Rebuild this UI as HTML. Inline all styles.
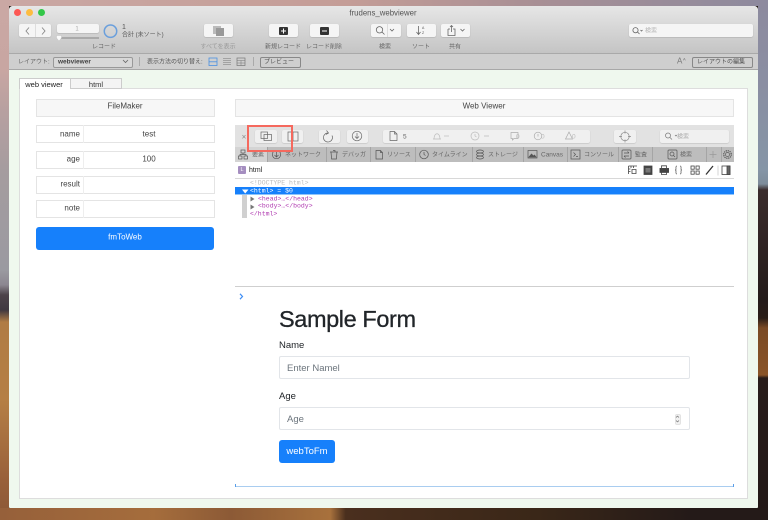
<!DOCTYPE html>
<html><head><meta charset="utf-8"><style>
html,body{margin:0;padding:0;width:768px;height:520px;overflow:hidden;background:#241b18}
#r{position:relative;width:768px;height:520px;overflow:hidden;filter:blur(.3px);font-family:"Liberation Sans","Noto Sans CJK JP",sans-serif}
#r div,#r svg{position:absolute}
.t{position:absolute;white-space:nowrap;line-height:1;transform:translateY(calc(-50% + .5px))}
.c{transform:translate(-50%,calc(-50% + .5px))}
.l{font-size:6px;color:#666}
.b{background:#f5f5f5;border-radius:2px;box-shadow:0 .5px 1px #aaa}
.g{background:#f0f0f0;border-radius:2px;box-shadow:0 .5px 1px #bbb}
.f{background:#fff;border:1px solid #e4e4e4;box-sizing:border-box}
.s{width:.5px;top:147px;height:15px;background:#a5a5a5}
.tb{font-size:6px;color:#666}
.m{font-family:"Liberation Mono",monospace;font-size:6.5px}
.ic{fill:none;stroke:#666;stroke-width:.8}
.bs{font-size:9.5px;color:#212529}
.ph{font-size:9.5px;color:#6c757d}
.o{border:1px solid #e2e5e9;border-radius:2px;box-sizing:border-box;background:#fff}
</style></head><body><div id="r">
<!-- wallpaper -->
<div style="left:0;top:0;width:9px;height:520px;background:linear-gradient(#caa8a4 0,#c8a6a2 70px,#b7a0a0 110px,#a59c9f 170px,#9a9aa0 270px,#8b8690 285px,#4d434a 295px,#3f3840 310px,#b07c44 322px,#b57f45 400px,#98603a 480px,#8a5735 520px)"></div>
<div style="left:758px;top:0;width:10px;height:520px;background:linear-gradient(#8d8a9e 0,#8a8ea2 80px,#8595a6 170px,#7d8c9a 184px,#3a2c2c 190px,#241b1a 300px,#2a1d18 318px,#7a4a26 328px,#8a5428 375px,#281c1a 378px,#231918 520px)"></div>
<div style="left:0;top:0;width:768px;height:6px;background:linear-gradient(90deg,#caa8a4,#c49d97 45%,#a88f95 70%,#8d8a9e)"></div>
<div style="left:0;top:508px;width:768px;height:12px;background:linear-gradient(90deg,#96603a 0,#a56d3c 20%,#8c5a36 30%,#a8713c 43%,#4a2f1e 45%,#3a2718 70%,#241a18 90%)"></div>
<!-- window -->
<div style="left:9px;top:6px;width:749px;height:502px;background:#eff8ee;border-radius:4px 4px 1px 1px;overflow:hidden">
<div style="left:0;top:0;width:749px;height:47px;background:linear-gradient(#e6e6e6,#c4c4c4);border-bottom:1px solid #a9a9a9"></div>
<div style="left:0;top:48px;width:749px;height:15px;background:#cfcfcf;border-bottom:1px solid #a8a8a8"></div>
</div>
<div style="left:14px;top:9px;width:7px;height:7px;border-radius:50%;background:#fc5753"></div>
<div style="left:26px;top:9px;width:7px;height:7px;border-radius:50%;background:#fdbc40"></div>
<div style="left:38px;top:9px;width:7px;height:7px;border-radius:50%;background:#33c748"></div>
<span class="t c" style="left:383px;top:13px;font-size:7.800px;color:#555">frudens_webviewer</span>
<!-- toolbar -->
<div class="b" style="left:19px;top:24px;width:32px;height:13px"></div>
<div style="left:35px;top:24px;width:.5px;height:13px;background:#ddd"></div>
<svg style="left:25px;top:27px" width="22" height="8"><path d="M4 .5L1 4l3 3.5M17 .5l3 3.500-3 3.500" fill="none" stroke="#888" stroke-width=".9"/></svg>
<div class="b" style="left:57px;top:24px;width:42px;height:9px"></div>
<span class="t c" style="left:77px;top:28.500px;font-size:6px;color:#aaa">1</span>
<div style="left:57px;top:37px;width:42px;height:1.500px;background:#aaa"></div>
<svg style="left:56px;top:35px" width="7" height="7"><path d="M.5.5h5v2.500l-2.500 3-2.500-3z" fill="#fafafa" stroke="#bbb" stroke-width=".4"/></svg>
<svg style="left:103px;top:24px" width="15" height="15"><circle cx="7.500" cy="7.200" r="6.200" fill="none" stroke="#6a9fdc" stroke-width="1.500"/></svg>
<span class="t" style="left:122px;top:26.500px;font-size:7px;color:#555">1</span>
<span class="t" style="left:122px;top:35px;font-size:6px;color:#555">合計 (未ソート)</span>
<span class="t c l" style="left:104px;top:47px">レコード</span>
<div class="b" style="left:204px;top:24px;width:29px;height:13px"></div>
<svg style="left:212px;top:25px" width="14" height="11"><rect x="1" y="1" width="8" height="8" fill="#bbb"/><rect x="4" y="3" width="8" height="8" fill="#999"/></svg>
<span class="t c l" style="left:218px;top:47px;color:#999">すべてを表示</span>
<div class="b" style="left:269px;top:24px;width:29px;height:13px"></div>
<svg style="left:279px;top:26.500px" width="9" height="9"><rect width="9" height="8" rx="1" fill="#333"/><path d="M4.500 1.500v5M2 4h5" stroke="#fff" stroke-width="1"/></svg>
<span class="t c l" style="left:283px;top:47px">新規レコード</span>
<div class="b" style="left:310px;top:24px;width:29px;height:13px"></div>
<svg style="left:320px;top:26.500px" width="9" height="9"><rect width="9" height="8" rx="1" fill="#333"/><path d="M2 4h5" stroke="#fff" stroke-width="1"/></svg>
<span class="t c l" style="left:324px;top:47px">レコード削除</span>
<div class="b" style="left:371px;top:24px;width:30px;height:13px"></div>
<div style="left:387px;top:24px;width:.5px;height:13px;background:#ddd"></div>
<svg style="left:375px;top:26px" width="24" height="9"><circle cx="4.500" cy="3.800" r="3.200" class="ic"/><path d="M7 6l2.500 2.500" class="ic"/><path d="M15 3l2 2 2-2" class="ic"/></svg>
<span class="t c l" style="left:385px;top:47px">検索</span>
<div class="b" style="left:407px;top:24px;width:29px;height:13px"></div>
<svg style="left:416px;top:26px" width="12" height="10"><path d="M2.500 0v8M.5 6l2 2.500L4.500 6" class="ic"/></svg>
<span class="t" style="left:422px;top:28px;font-size:3.500px;color:#555">A</span><span class="t" style="left:422px;top:33px;font-size:3.500px;color:#555">Z</span>
<span class="t c l" style="left:421px;top:47px">ソート</span>
<div class="b" style="left:441px;top:24px;width:29px;height:13px"></div>
<svg style="left:447px;top:25px" width="20" height="11"><path d="M1 4h2M6 4h2v6.500H1V4M4.500 7V.5M3 2l1.500-1.500L6 2" class="ic"/><path d="M13.500 4l2 2 2-2" class="ic"/></svg>
<span class="t c l" style="left:455px;top:47px">共有</span>
<div class="b" style="left:629px;top:24px;width:124px;height:13px"></div>
<svg style="left:632px;top:27px" width="12" height="8"><circle cx="3.500" cy="3.200" r="2.600" class="ic"/><path d="M5.500 5l2 2" class="ic"/><path d="M8.500 3l1 1 1-1" class="ic"/></svg>
<span class="t" style="left:645px;top:31px;font-size:6px;color:#b5b5b5">検索</span>
<!-- layout bar -->
<span class="t l" style="left:18px;top:61.500px">レイアウト:</span>
<div style="left:52.500px;top:56.500px;width:78px;height:9.500px;border:.5px solid #999;border-radius:2px;background:#d8d8d8"></div>
<span class="t" style="left:58px;top:61.500px;font-size:6.500px;font-weight:bold;color:#444">webviewer</span>
<svg style="left:122px;top:59px" width="7" height="5"><path d="M1 1l2.500 2.500L6 1" class="ic"/></svg>
<div style="left:139px;top:57px;width:.5px;height:9px;background:#aaa"></div>
<span class="t l" style="left:147px;top:61.500px;color:#555">表示方法の切り替え:</span>
<svg style="left:208px;top:56.500px" width="40" height="10"><rect x="1" y="1" width="8" height="7.500" fill="none" stroke="#4a90e2" stroke-width=".8"/><path d="M1 4.800h8" stroke="#4a90e2" stroke-width=".8"/><path d="M15 1.500h8M15 3.500h8M15 5.500h8M15 7.500h8" stroke="#777" stroke-width=".6"/><rect x="29" y="1" width="8" height="7.500" fill="none" stroke="#777" stroke-width=".7"/><path d="M29 3.500h8M29 6h8M33 3.500v5" stroke="#777" stroke-width=".5"/></svg>
<div style="left:253px;top:57px;width:.5px;height:9px;background:#aaa"></div>
<div style="left:259.500px;top:57px;width:39px;height:8.500px;border:.5px solid #888;border-radius:2px"></div>
<span class="t c" style="left:279px;top:61.500px;font-size:6px;color:#555">プレビュー</span>
<span class="t" style="left:677px;top:61px;font-size:8px;color:#777">A</span><span class="t" style="left:683px;top:59px;font-size:4px;color:#777">A</span>
<div style="left:691.500px;top:57px;width:59px;height:8.500px;border:.5px solid #888;border-radius:2px"></div>
<span class="t c" style="left:721px;top:61.500px;font-size:6px;color:#555">レイアウトの編集</span>
<!-- tabs / panel -->
<div style="left:18.500px;top:88px;width:729.500px;height:410.500px;background:#fff;border:.5px solid #ddd;box-sizing:border-box"></div>
<div style="left:70px;top:78px;width:52px;height:10.500px;background:#f4f4f4;border:.5px solid #ccc;box-sizing:border-box"></div>
<div style="left:18.500px;top:78px;width:52px;height:11px;background:#fff;border:.5px solid #ccc;border-bottom:0;box-sizing:border-box"></div>
<span class="t c" style="left:44px;top:83.500px;font-size:7.500px;color:#222">web viewer</span>
<span class="t c" style="left:96px;top:83.500px;font-size:7.500px;color:#333">html</span>
<!-- left column -->
<div class="f" style="left:36px;top:99px;width:178.500px;height:17.500px;background:#f7f7f7"></div>
<span class="t c" style="left:125px;top:106px;font-size:8px;color:#444">FileMaker</span>
<div class="f" style="left:36px;top:125px;width:178.500px;height:18px"></div><div style="left:83px;top:125px;width:1px;height:18px;background:#eee"></div>
<span class="t" style="right:688px;top:133.500px;font-size:8px;color:#444">name</span><span class="t c" style="left:149px;top:133.500px;font-size:8px;color:#444">test</span>
<div class="f" style="left:36px;top:151px;width:178.500px;height:18px"></div><div style="left:83px;top:151px;width:1px;height:18px;background:#eee"></div>
<span class="t" style="right:688px;top:159px;font-size:8px;color:#444">age</span><span class="t c" style="left:149px;top:159px;font-size:8px;color:#444">100</span>
<div class="f" style="left:36px;top:176px;width:178.500px;height:18px"></div><div style="left:83px;top:176px;width:1px;height:18px;background:#eee"></div>
<span class="t" style="right:688px;top:184px;font-size:8px;color:#444">result</span>
<div class="f" style="left:36px;top:200px;width:178.500px;height:18px"></div><div style="left:83px;top:200px;width:1px;height:18px;background:#eee"></div>
<span class="t" style="right:688px;top:208px;font-size:8px;color:#444">note</span>
<div style="left:36px;top:227px;width:178px;height:23px;background:#1680fb;border-radius:3px"></div>
<span class="t c" style="left:125px;top:237px;font-size:8px;color:#fff">fmToWeb</span>
<!-- right header -->
<div class="f" style="left:235px;top:99px;width:499px;height:18px;background:#f7f7f7"></div>
<span class="t c" style="left:484px;top:106px;font-size:8px;color:#444">Web Viewer</span>
<!-- inspector toolbar -->
<div style="left:235px;top:125px;width:499px;height:22px;background:#e2e2e2"></div>
<span class="t c" style="left:244px;top:137px;font-size:8px;color:#888">×</span>
<div class="g" style="left:255px;top:130px;width:21.500px;height:12.500px"></div>
<div class="g" style="left:282px;top:130px;width:21px;height:12.500px"></div>
<div class="g" style="left:319px;top:130px;width:21px;height:12.500px"></div>
<div class="g" style="left:347px;top:130px;width:21px;height:12.500px"></div>
<div class="g" style="left:383px;top:130px;width:207px;height:12.500px"></div>
<div class="g" style="left:614px;top:130px;width:21.500px;height:12.500px"></div>
<div class="g" style="left:660px;top:130px;width:69px;height:12.500px"></div>
<svg style="left:235px;top:125px" width="499" height="22" fill="none" stroke="#666" stroke-width=".7">
<rect x="26" y="7" width="6.500" height="6.500"/><rect x="29" y="9.500" width="7.500" height="6"/>
<rect x="53" y="7" width="10" height="9"/><path d="M58 7v9"/>
<path d="M93 8a4.500 4.500 0 1 0 4 2.500M91.500 5.500L93.500 8 91 9.500"/>
<circle cx="122" cy="11" r="4.800"/><path d="M122 8v5.500M120 11.500l2 2 2-2"/>
<path d="M155 6.500h4.500l2.500 2.500v6.500h-7zM159.500 6.500V9h2.500"/>
<path d="M198 14h8M199 14c0-7 6-7 6 0" stroke="#bbb"/><path d="M209 11h5" stroke="#bbb"/>
<circle cx="240" cy="11" r="4" stroke="#bbb"/><path d="M240 9v2l1.500 1M249 11h5" stroke="#bbb"/>
<path d="M276 7.500h7v6h-4l-1.500 1.500v-1.500H276z" stroke="#aaa"/>
<circle cx="303" cy="11" r="3.800" stroke="#aaa"/><path d="M303 9v2.500" stroke="#aaa"/>
<path d="M334 7l3.500 7h-7z" stroke="#aaa"/>
<circle cx="390" cy="11.500" r="4.200" stroke="#888"/><path d="M390 5.500v3M390 14.500v3M384 11.500h3M393 11.500h3" stroke="#888"/>
<circle cx="433" cy="10.500" r="2.500" stroke="#777"/><path d="M435 12.500l2 2M440 10l1 1 1-1" stroke="#777"/>
</svg>
<span class="t" style="left:403px;top:136.500px;font-size:6.500px;color:#666">5</span>
<span class="t" style="left:516px;top:136.500px;font-size:6.500px;color:#bbb">0</span>
<span class="t" style="left:541px;top:136.500px;font-size:6.500px;color:#bbb">0</span>
<span class="t" style="left:572px;top:136.500px;font-size:6.500px;color:#bbb">0</span>
<span class="t" style="left:677px;top:136.500px;font-size:6px;color:#aaa">検索</span>
<!-- inspector tabs -->
<div style="left:235px;top:147px;width:499px;height:15px;background:#bdbdbd"></div>
<div style="left:235px;top:147px;width:32px;height:15px;background:#d4d4d4"></div>
<div class="s" style="left:267px"></div><div class="s" style="left:325.500px"></div><div class="s" style="left:370px"></div><div class="s" style="left:415px"></div><div class="s" style="left:472px"></div><div class="s" style="left:523px"></div><div class="s" style="left:567px"></div><div class="s" style="left:618px"></div><div class="s" style="left:651.500px"></div><div class="s" style="left:705.500px"></div><div class="s" style="left:720.500px"></div>
<svg style="left:235px;top:147px" width="499" height="15" fill="none" stroke="#555" stroke-width=".7">
<rect x="6" y="3" width="4" height="3"/><rect x="3.500" y="9" width="3.500" height="3"/><rect x="9" y="9" width="3.500" height="3"/><path d="M8 6v1.500H5V9M8 7.500h3V9"/>
<circle cx="41.500" cy="7.500" r="4.200"/><path d="M41.500 4v6M39.500 8l2 2 2-2"/>
<path d="M96 5h6l-.6 7h-4.800zM95 5h8M98 3.500h2v1.500"/>
<path d="M141 3.500h4.500l2 2v6.500H141zM145.500 3.500v2h2"/>
<circle cx="189" cy="7.500" r="4.300"/><path d="M189 5v2.500l1.500 1"/>
<ellipse cx="245" cy="4.500" rx="3.500" ry="1.500"/><ellipse cx="245" cy="7.500" rx="3.500" ry="1.500"/><ellipse cx="245" cy="10.500" rx="3.500" ry="1.500"/>
<rect x="293" y="3.500" width="9" height="7.500"/><path d="M294 10l2.500-3 2 2 1-1 1.500 2z" fill="#555"/>
<rect x="336" y="3" width="9" height="9"/><path d="M338.500 5.500l2 2-2 2M341 9.500h2"/>
<rect x="387" y="3" width="9" height="9" rx="1"/><path d="M389 6h5M392.500 4.500L394 6M389 9h5M390.500 10.500L389 9"/>
<rect x="433" y="3" width="9" height="9" rx="1"/><circle cx="437" cy="7" r="2"/><path d="M438.500 8.500l1.500 1.500"/>
<path d="M478 4v7M474.500 7.500h7" stroke="#999"/>
<circle cx="492.500" cy="7.500" r="2"/><circle cx="492.500" cy="7.500" r="3.800" stroke-dasharray="1.200 .8" stroke-width="1.200"/>
</svg>
<span class="t tb" style="left:252px;top:155px">要素</span>
<span class="t tb" style="left:285px;top:155px">ネットワーク</span>
<span class="t tb" style="left:342px;top:155px">デバッガ</span>
<span class="t tb" style="left:387px;top:155px">リソース</span>
<span class="t tb" style="left:432px;top:155px">タイムライン</span>
<span class="t tb" style="left:488px;top:155px">ストレージ</span>
<span class="t tb" style="left:541px;top:155px;font-size:6.500px">Canvas</span>
<span class="t tb" style="left:584px;top:155px">コンソール</span>
<span class="t tb" style="left:635px;top:155px">監査</span>
<span class="t tb" style="left:680px;top:155px">検索</span>
<!-- breadcrumb -->
<div style="left:238px;top:166px;width:8px;height:8px;background:#a58ec0;border-radius:1px"></div>
<span class="t c" style="left:242px;top:170px;font-size:5.500px;color:#fff">L</span>
<span class="t" style="left:249px;top:170px;font-size:7px;color:#222">html</span>
<div style="left:235px;top:178px;width:499px;height:1px;background:#d8d8d8"></div>
<svg style="left:628px;top:165px" width="104" height="11" fill="none" stroke="#444" stroke-width=".8">
<path d="M.5 1h8.500M.5 1v8M3 1v2M5.500 1v2M.5 4h2M.5 6.500h2M4 4.500h4v4h-4z"/>
<rect x="16" y="1" width="8" height="8.500" fill="#444"/><rect x="17.500" y="3" width="5" height="4.500" fill="#777" stroke="none"/>
<path d="M33.500 3V.8h5V3M32 3.500h8.500v4H32zM33.500 6.500h5v3h-5z"/><rect x="32" y="3.500" width="8.500" height="3.500" fill="#444"/>
<path d="M49 1c-1.500 0-1 2-1 3s-1 1-1 1 1 0 1 1-.5 3 1 3M52 1c1.500 0 1 2 1 3s1 1 1 1-1 0-1 1 .5 3-1 3" stroke="#666"/>
<rect x="63" y="1" width="3.200" height="3.200"/><rect x="68" y="1" width="3.200" height="3.200"/><rect x="63" y="6" width="3.200" height="3.200"/><rect x="68" y="6" width="3.200" height="3.200"/>
<path d="M78 9.500l7-8.500" stroke-width="1.300" stroke="#333"/>
<path d="M90 .5v10" stroke="#ccc"/>
<rect x="94" y="1" width="8" height="8.500"/><rect x="99" y="1" width="3" height="8.500" fill="#666"/>
</svg>
<!-- DOM -->
<span class="t m" style="left:250px;top:183px;color:#bcbcbc">&lt;!DOCTYPE html&gt;</span>
<div style="left:235px;top:187px;width:499px;height:7px;background:#1680fb;border-bottom:.5px solid #8fc4fb"></div>
<svg style="left:242px;top:188.500px" width="8" height="5"><path d="M0 .5h6.500L3.200 4.500z" fill="#fff"/></svg>
<span class="t m" style="left:250px;top:190.500px;color:#fff">&lt;html&gt; = $0</span>
<div style="left:242px;top:195px;width:5px;height:23px;background:#d0d0d0"></div>
<svg style="left:250px;top:195.500px" width="6" height="16"><path d="M.5 .5l4 2.500-4 2.500zM.5 8.500l4 2.500-4 2.500z" fill="#777"/></svg>
<span class="t m" style="left:258px;top:198.500px;color:#b03ab0">&lt;head&gt;…&lt;/head&gt;</span>
<span class="t m" style="left:258px;top:206px;color:#b03ab0">&lt;body&gt;…&lt;/body&gt;</span>
<span class="t m" style="left:250px;top:214px;color:#b03ab0">&lt;/html&gt;</span>
<div style="left:235px;top:286px;width:499px;height:1px;background:#cfcfcf"></div>
<svg style="left:239px;top:293px" width="5" height="7"><path d="M1 .8L3.500 3.500 1 6.200" fill="none" stroke="#3d8df5" stroke-width="1.200"/></svg>
<!-- form -->
<span class="t" style="left:279px;top:319px;font-size:23.500px;letter-spacing:-.4px;color:#212529;-webkit-text-stroke:.3px #212529">Sample Form</span>
<span class="t bs" style="left:279px;top:344.500px">Name</span>
<div class="o" style="left:279px;top:356px;width:411px;height:23px"></div>
<span class="t ph" style="left:287px;top:368px">Enter Namel</span>
<span class="t bs" style="left:279px;top:396px">Age</span>
<div class="o" style="left:279px;top:407px;width:411px;height:23px"></div>
<span class="t ph" style="left:287px;top:419px">Age</span>
<div style="left:674.500px;top:413.500px;width:6px;height:11px;border-radius:2px;background:#f1f1f1;border:.5px solid #e2e2e2;box-sizing:border-box"></div>
<svg style="left:675px;top:414px" width="5" height="10"><path d="M1 3.500l1.500-1.500L4 3.500M1 6.500L2.500 8 4 6.500" fill="none" stroke="#666" stroke-width=".6"/></svg>
<div style="left:279px;top:440px;width:56px;height:23px;background:#1680fb;border-radius:3px"></div>
<span class="t c" style="left:307px;top:451px;font-size:9.500px;color:#fff">webToFm</span>
<div style="left:235px;top:486px;width:499px;height:1px;background:#a9cdf0"></div>
<div style="left:235px;top:484px;width:.7px;height:3px;background:#5a9ee8"></div>
<div style="left:733px;top:484px;width:.7px;height:3px;background:#5a9ee8"></div>
<!-- red highlight -->
<div style="left:246.500px;top:124.500px;width:46px;height:27px;border:2.500px solid #f5695e;box-sizing:border-box"></div>
</div></body></html>
